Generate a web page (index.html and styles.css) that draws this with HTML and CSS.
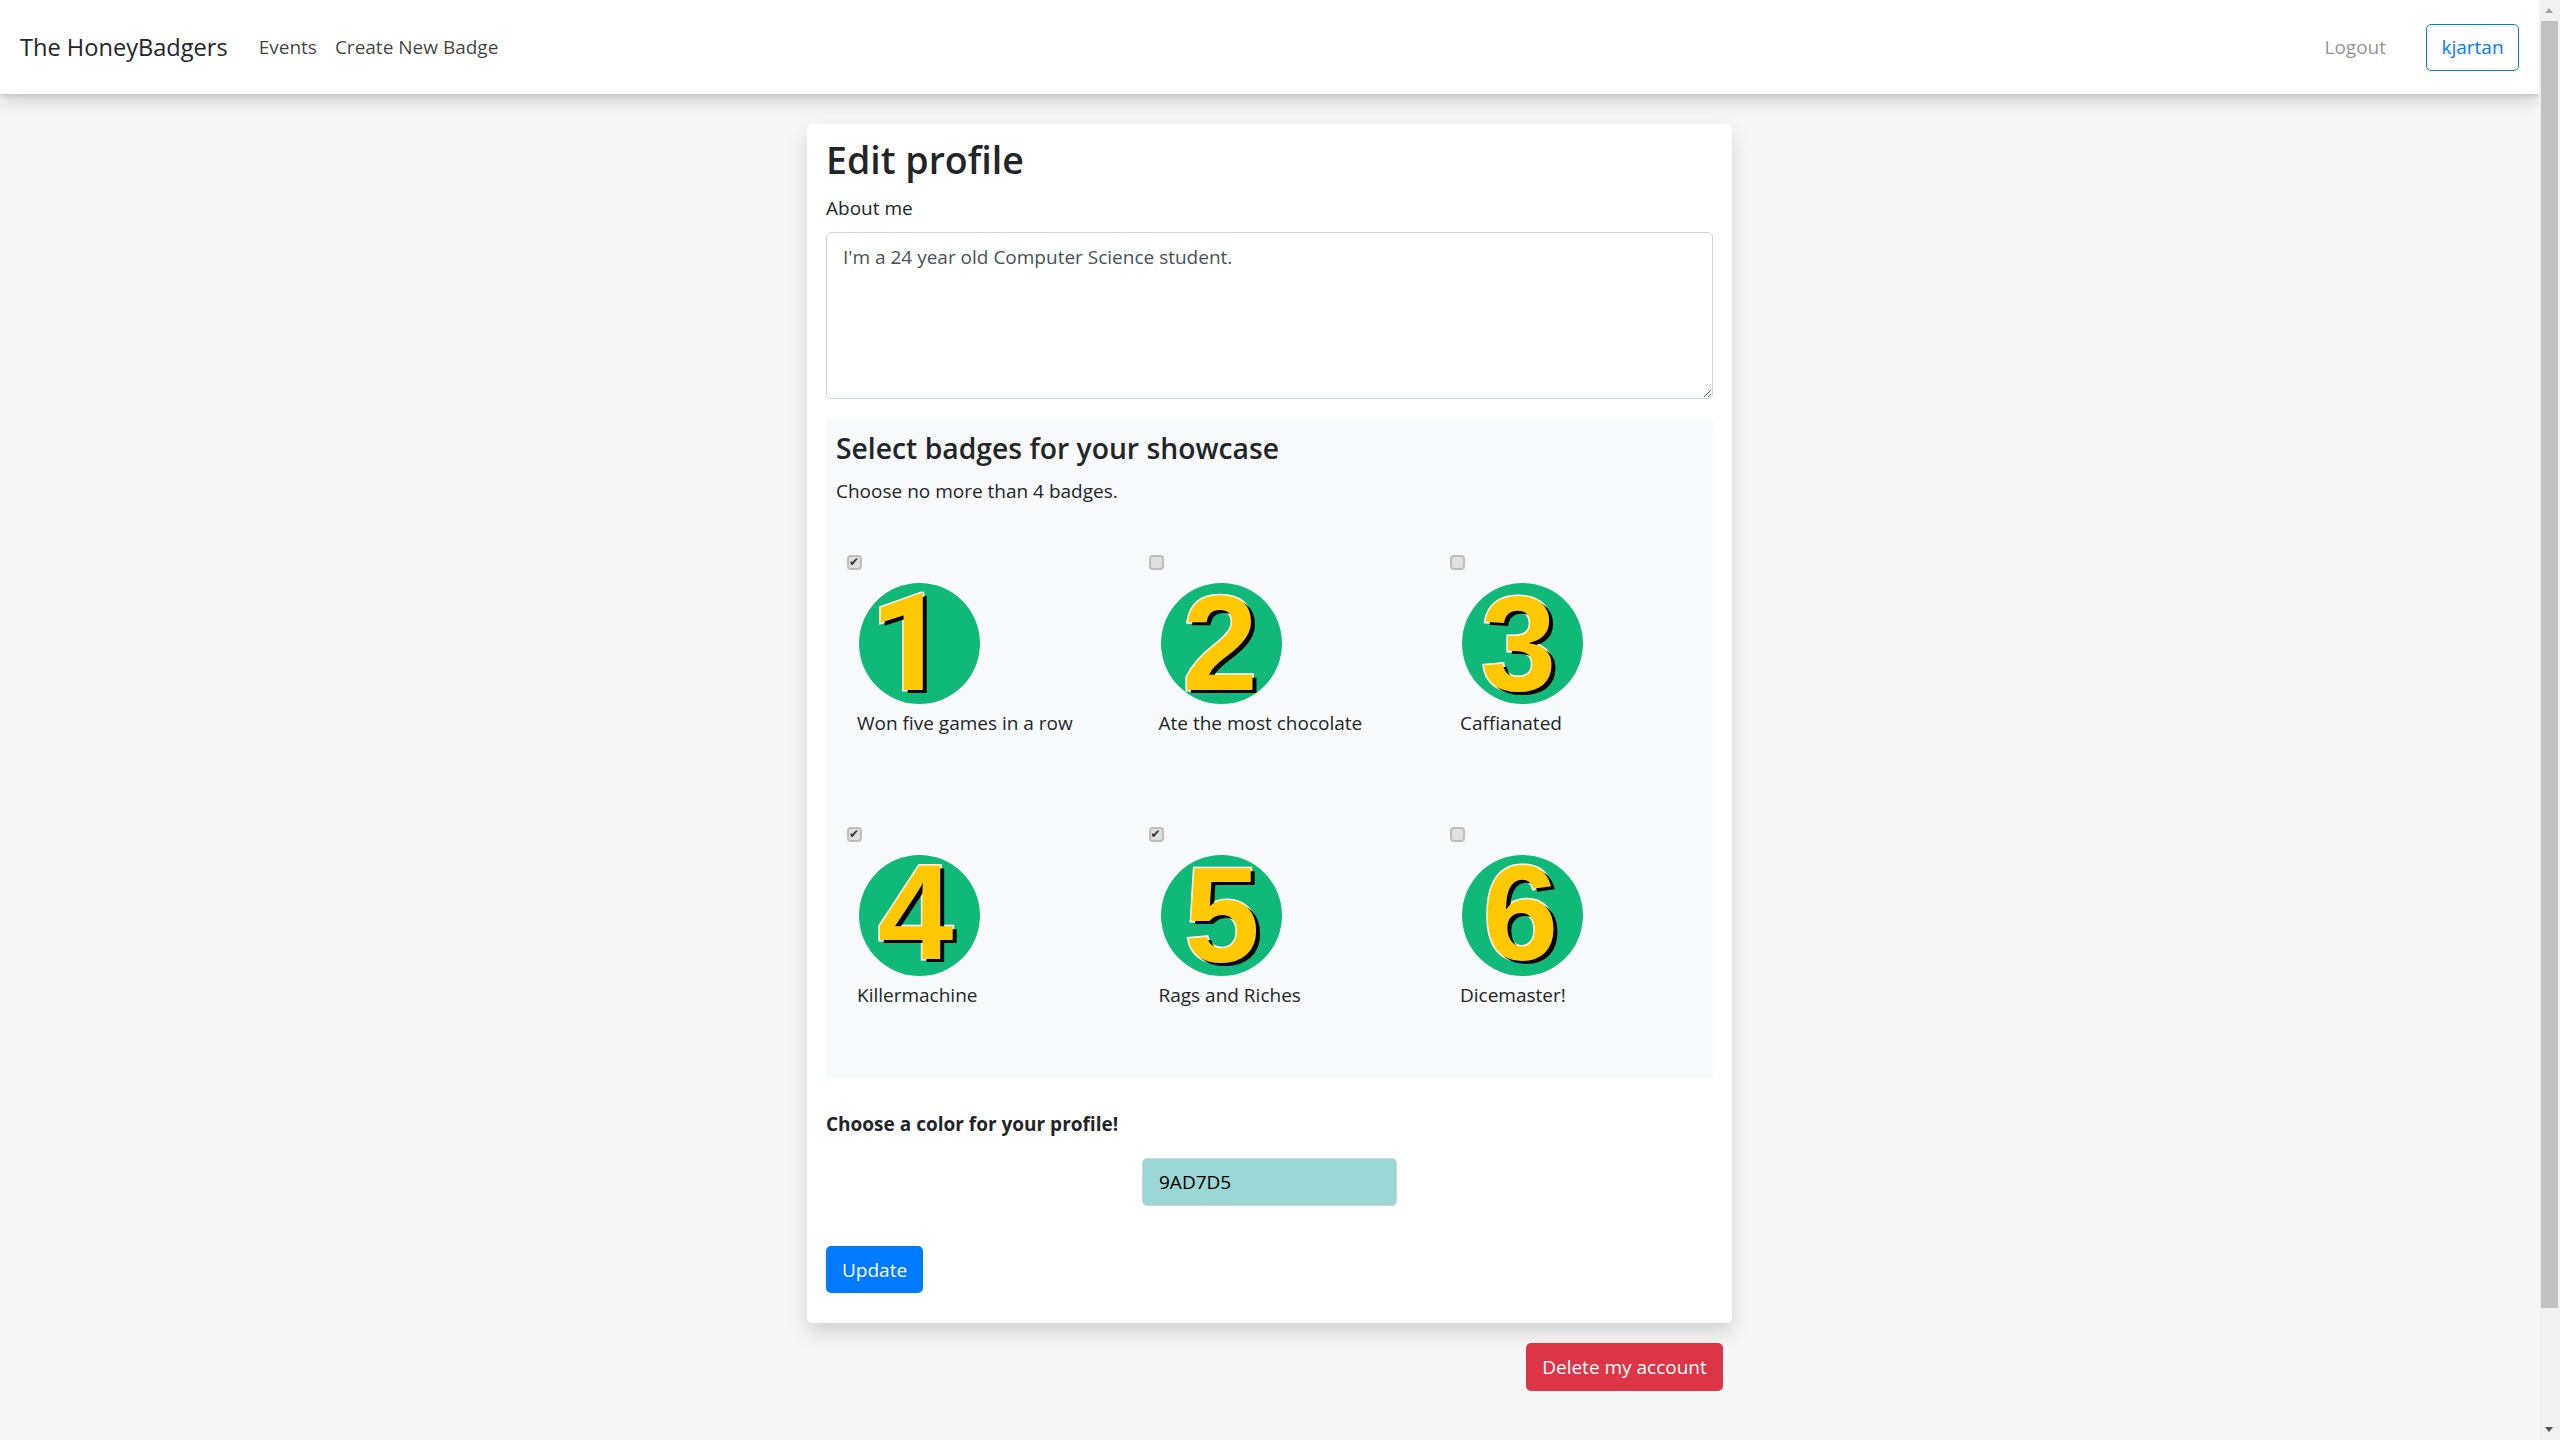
FILE: index.html
```html
<!DOCTYPE html>
<html lang="en">
<head>
<meta charset="utf-8">
<title>Edit profile</title>
<link rel="stylesheet" href="styles.css">
</head>
<body>
<div class="page">
  <div class="main">
    <nav class="navbar">
      <a class="brand">The HoneyBadgers</a>
      <a class="nav-link">Events</a>
      <a class="nav-link">Create New Badge</a>
      <span class="spacer"></span>
      <a class="logout">Logout</a>
      <a class="user-btn">kjartan</a>
    </nav>
    <div class="content">
      <form class="card">
        <h1 class="title">Edit profile</h1>
        <label class="about-label">About me</label>
        <textarea class="about">I'm a 24 year old Computer Science student.</textarea>
        <section class="badges">
          <h4 class="badges-title">Select badges for your showcase</h4>
          <p class="badges-help">Choose no more than 4 badges.</p>
          <div class="badge-grid">
            <div class="badge"><input type="checkbox" class="check" checked>
              <div class="medal"><span class="digit d1">1</span></div>
              <div class="badge-name">Won five games in a row</div></div>
            <div class="badge"><input type="checkbox" class="check">
              <div class="medal"><span class="digit d2">2</span></div>
              <div class="badge-name">Ate the most chocolate</div></div>
            <div class="badge"><input type="checkbox" class="check">
              <div class="medal"><span class="digit d3">3</span></div>
              <div class="badge-name">Caffianated</div></div>
            <div class="badge"><input type="checkbox" class="check" checked>
              <div class="medal"><span class="digit d4">4</span></div>
              <div class="badge-name">Killermachine</div></div>
            <div class="badge"><input type="checkbox" class="check" checked>
              <div class="medal"><span class="digit d5">5</span></div>
              <div class="badge-name">Rags and Riches</div></div>
            <div class="badge"><input type="checkbox" class="check">
              <div class="medal"><span class="digit d6">6</span></div>
              <div class="badge-name">Dicemaster!</div></div>
          </div>
        </section>
        <label class="color-label">Choose a color for your profile!</label>
        <div class="color-row"><input class="color-input" type="text" value="9AD7D5"></div>
        <button type="button" class="btn btn-primary">Update</button>
      </form>
      <div class="danger-row"><button type="button" class="btn btn-danger">Delete my account</button></div>
    </div>
  </div>
  <aside class="scrollbar">
    <span class="arrow arrow-up"></span>
    <span class="thumb"></span>
    <span class="arrow arrow-down"></span>
  </aside>
</div>
</body>
</html>
```
FILE: styles.css
```css
* { box-sizing: border-box; }
html, body { margin: 0; height: 1440px; overflow: hidden; }
body {
  font-family: "Open Sans", "Noto Sans", sans-serif;
  font-size: 19px;
  color: #212529;
  background: #f7f7f7;
}
.page { display: flex; height: 1440px; }
.main { flex: 1; min-width: 0; display: flex; flex-direction: column; }
.navbar {
  height: 94px;
  background: #fff;
  display: flex;
  align-items: center;
  padding: 0 20px;
  box-shadow: 0 8px 16px rgba(0,0,0,.15), 0 2px 4px rgba(0,0,0,.1);
  position: relative;
}
.brand { font-size: 23.6px; margin-right: 31px; }
.nav-link { margin-right: 18px; color: rgba(0,0,0,.75); }
.spacer { flex: 1; }
.logout { color: rgba(0,0,0,.45); margin-right: 40px; }
.user-btn {
  height: 47px;
  width: 93px;
  display: flex;
  align-items: center;
  justify-content: center;
  border: 1.25px solid #007bff;
  border-radius: 5px;
  color: #007bff;
}
.content { width: 925px; margin: 30px auto 0; }
.card {
  display: block;
  background: #fff;
  border-radius: 5px;
  padding: 0 19px;
  height: 1199px;
  box-shadow: 0 10px 20px rgba(0,0,0,.15);
}
.title { margin: 0; padding-top: 12px; font-size: 37.5px; line-height: 48px; font-weight: 600; }
.about-label { display: block; margin-top: 9px; line-height: 30px; }
.about {
  display: block;
  width: 100%;
  height: 167px;
  margin-top: 9px;
  padding: 9px 16px;
  border: 1.25px solid #ced4da;
  border-radius: 5px;
  font: inherit;
  line-height: 30px;
  color: #495057;
  background: #fff;
}
.badges { margin-top: 20px; height: 659px; background: #f8f9fa; padding: 9px 10px 10px; }
.badges-title { margin: 0; font-size: 28.3px; line-height: 40px; font-weight: 600; }
.badges-help { margin: 8px 0 0; line-height: 30px; }
.badge-grid {
  display: grid;
  grid-template-columns: repeat(3, 301.5px);
  grid-auto-rows: 272px;
  margin: 49px 0 0 11px;
}
.check {
  appearance: none;
  display: block;
  width: 15px;
  height: 15px;
  margin: 0;
  background: #e0e0e0;
  border: 2px solid #bdbdbd;
  border-radius: 4px;
  position: relative;
}
.check:checked::after {
  content: "✔";
  position: absolute;
  left: 0;
  top: -3px;
  font: bold 12px/16px "DejaVu Sans", sans-serif;
  color: #333;
}
.medal {
  display: flex;
  align-items: center;
  justify-content: center;
  width: 121px;
  height: 121px;
  margin: 13px 0 0 12px;
  border-radius: 50%;
  background: #10b87a;
  box-shadow: 0 0 0 .5px #fff;
}
.digit {
  font-family: "Liberation Sans", Arial, sans-serif;
  font-weight: 700;
  font-size: 136px;
  line-height: 121px;
  color: #ffc800;
  -webkit-text-stroke: 3px #fff;
  paint-order: stroke fill;
  text-shadow: 4px 3px 0 #000;
  position: relative;
}
.d1 { font-family: Roboto, sans-serif; left: -11px; }
.d2 { left: -1px; }
.d3 { left: -4px; }
.d4 { left: -4px; top: -3px; }
.d5 { left: 1px; }
.d6 { left: -2px; top: -2px; }
.badge-name { margin: 3.5px 0 0 10px; line-height: 30px; }
.color-label { display: block; margin-top: 31px; font-weight: 700; line-height: 30px; }
.color-row { display: flex; justify-content: center; margin-top: 19px; }
.color-input {
  width: 255px;
  height: 48px;
  padding: 0 16px;
  border: 1.25px solid #ced4da;
  border-radius: 5px;
  background: #9ad7d5;
  color: #000;
  font: inherit;
}
.btn {
  display: block;
  height: 47px;
  padding: 0 16px;
  border: 0;
  border-radius: 5px;
  color: #fff;
  font: inherit;
}
.btn-primary { margin-top: 40px; width: 97px; background: #007bff; }
.danger-row { display: flex; justify-content: flex-end; margin: 20px 9px 0 0; }
.btn-danger { width: 197px; height: 48px; background: #dc3545; }
.scrollbar {
  flex: 0 0 21px;
  background: #f1f1f1;
  display: flex;
  flex-direction: column;
  align-items: center;
  position: relative;
}
.thumb { position: absolute; top: 21px; left: 2px; width: 17px; height: 1287px; background: #c1c1c1; }
.arrow { position: absolute; left: 6px; width: 0; height: 0; border-left: 4.5px solid transparent; border-right: 4.5px solid transparent; }
.arrow-up { top: 8px; border-bottom: 5px solid #a3a3a3; }
.arrow-down { bottom: 8px; border-top: 5px solid #505050; }
```
